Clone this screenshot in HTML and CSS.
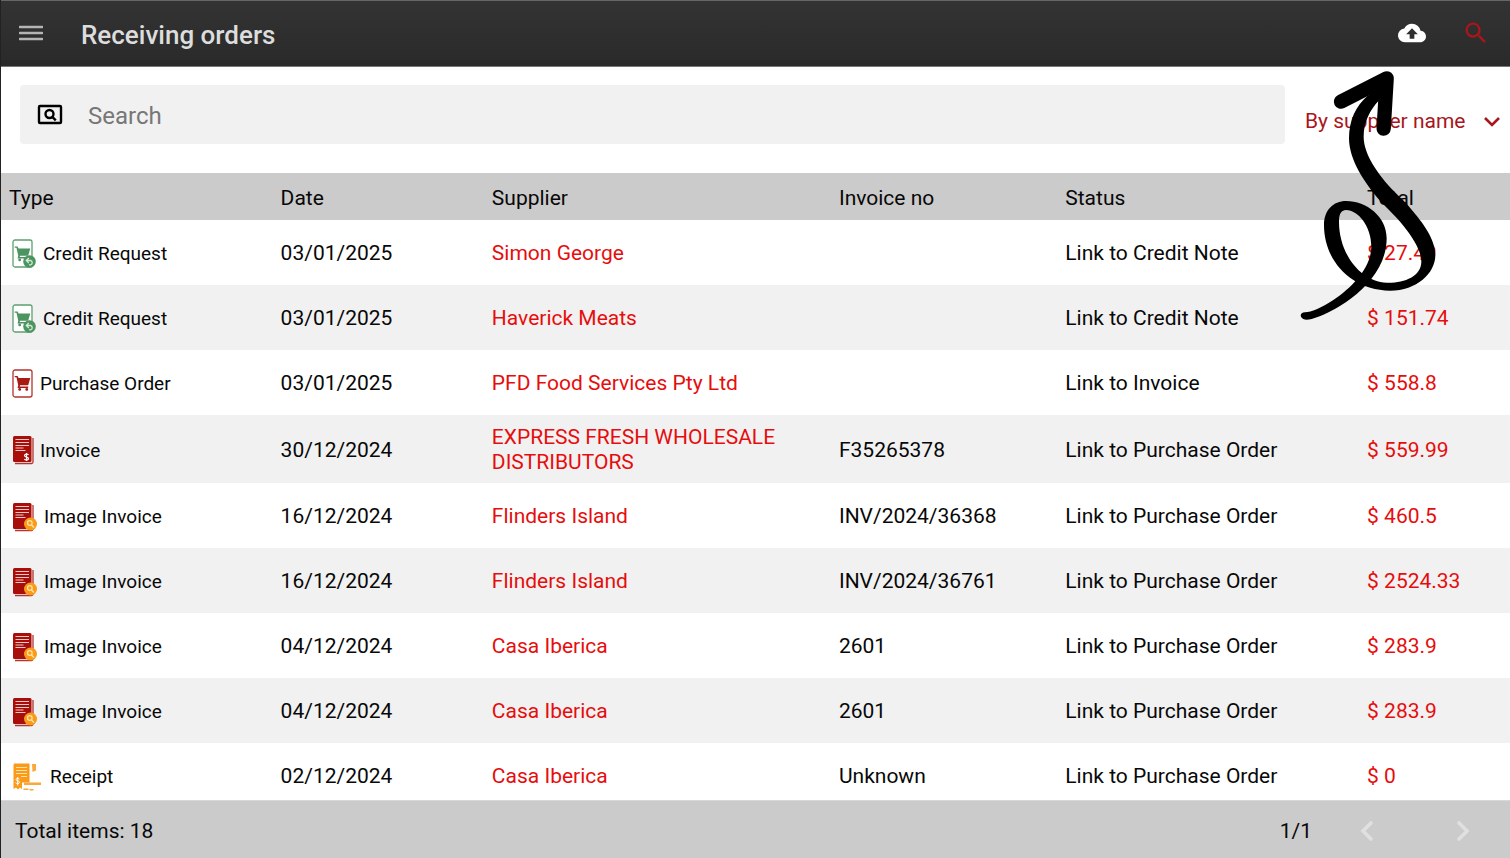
FILE: index.html
```html
<!DOCTYPE html>
<html lang="en">
<head>
    <meta charset="UTF-8">
    <meta name="viewport" content="width=device-width, initial-scale=1.0">
    <title>Receiving orders</title>
    <link rel="stylesheet" href="styles.css">
</head>
<body>
    <!-- shared icons -->
    <svg class="sprite" aria-hidden="true">
        <symbol id="cart" viewBox="0 0 24 24">
            <path d="M1 2h4l1.500 3H23l-3 10H8.500L8 17h12v2H5l1-4L3.500 4H1z"/>
            <circle cx="8" cy="21" r="2"/>
            <circle cx="18" cy="21" r="2"/>
        </symbol>
        <symbol id="credit" viewBox="0 0 24 30">
            <rect x="1" y="1" width="19" height="27" rx="2" fill="#fff" stroke="#5fa070" stroke-width="1.300"/>
            <use href="#cart" x="2" y="6" width="17" height="17" fill="#4c9460"/>
            <circle cx="17.500" cy="22.500" r="6.300" fill="#4c9460"/>
            <path d="M14.500 21.500h4a2.200 2.200 0 0 1 0 4.300h-1.500M16.800 19l-2.500 2.500 2.500 2.500" fill="none" stroke="#d5ead9" stroke-width="1.300"/>
        </symbol>
        <symbol id="purchase" viewBox="0 0 22 30">
            <rect x="1" y="1" width="19" height="27" rx="2" fill="#fff" stroke="#b3352f" stroke-width="1.300"/>
            <use href="#cart" x="2" y="5" width="17" height="18" fill="#a81a14"/>
        </symbol>
        <symbol id="book" viewBox="0 0 22 30">
            <path d="M3 28.500h16.500q1.500 0 1.500-1.500V3" fill="none" stroke="#b3352f" stroke-width="1.300"/>
            <rect x="1" y="1" width="18.500" height="26" rx="1.500" fill="#a80f0a"/>
            <path d="M3.500 4.500h13.500M3.500 7.500h13.500M3.500 10.500h13.500M3.500 13h8M3.500 15.500h10" stroke="#f3c8c4" stroke-width="1.200"/>
        </symbol>
        <symbol id="invoice" viewBox="0 0 22 30">
            <use href="#book" width="22" height="30"/>
            <path d="M16.500 19.800c-1-1.200-4-1-4 .8 0 2 4 1 4 3 0 1.900-3 2-4.200.6M14.500 18v8" fill="none" stroke="#fff" stroke-width="1.200"/>
        </symbol>
        <symbol id="image-invoice" viewBox="0 0 26 30">
            <use href="#book" width="22" height="30"/>
            <circle cx="18.500" cy="22" r="6.500" fill="#fb9a16"/>
            <circle cx="17.800" cy="21" r="2.300" fill="none" stroke="#ffe3a8" stroke-width="1.300"/>
            <path d="M19.500 23l2.500 2.500" stroke="#ffe3a8" stroke-width="1.500"/>
        </symbol>
        <symbol id="receipt" viewBox="0 0 30 30">
            <path d="M2 1.500h15.500v19H10V27l-2-1.500L6 27.500 4 25.500l-2.500 1.500V3z" fill="#fb9a16"/>
            <path d="M4 5.500h11M4 8.500h11M4 11.500h11M9 14.500h6" stroke="#ffe0ae" stroke-width="1"/>
            <path d="M7.500 17c-1-1-3.500-1-3.500.5 0 1.800 3.500 1 3.500 2.800 0 1.700-3 1.700-4 .5M5.700 15v8.500" fill="none" stroke="#fff" stroke-width="1"/>
            <path d="M20 2h4v6.500l-3.500 1.500zM12 20.500h17v2.500H12zM11.500 26.500h5v1.500h-5zM17.500 27h4v1.500h-4z" fill="#fba83a"/>
        </symbol>
    </svg>

    <header class="topbar">
        <button class="icon-button" aria-label="Menu">
            <svg width="24" height="18" viewBox="0 0 24 18"><path d="M1 3h22M1 9h22M1 15h22" stroke="#b4b4b4" stroke-width="2.600" stroke-linecap="round"/></svg>
        </button>
        <h1>Receiving orders</h1>
        <button class="icon-button" aria-label="Upload">
            <svg width="28" height="28" viewBox="0 0 24 24" fill="#fff"><path d="M19.350 10.040A7.490 7.490 0 0 0 12 4C9.110 4 6.600 5.640 5.350 8.040A5.994 5.994 0 0 0 0 14c0 3.310 2.690 6 6 6h13c2.760 0 5-2.240 5-5 0-2.640-2.050-4.780-4.650-4.960zM14 13v4h-4v-4H7l5-5 5 5h-3z"/></svg>
        </button>
        <button class="icon-button" aria-label="Search">
            <svg width="28" height="28" viewBox="0 0 24 24" fill="#a9161b"><path d="M15.500 14h-.79l-.28-.27A6.471 6.471 0 0 0 16 9.500 6.500 6.500 0 1 0 9.500 16c1.610 0 3.090-.59 4.230-1.570l.27.28v.79l5 4.990L20.490 19l-4.990-5zm-6 0C7.010 14 5 11.990 5 9.500S7.010 5 9.500 5 14 7.010 14 9.500 11.990 14 9.500 14z"/></svg>
        </button>
    </header>

    <div class="filters">
        <label class="search">
            <svg width="26" height="22" viewBox="0 0 26 22" fill="none" stroke="#000" stroke-width="2.400">
                <rect x="2" y="2" width="22" height="17" rx="1"/>
                <circle cx="12.500" cy="10" r="4"/>
                <path d="M15.300 12.800l3.500 3.500"/>
            </svg>
            <input type="search" placeholder="Search" aria-label="Search orders">
        </label>
        <div class="sort">
            <select aria-label="Sort orders">
                <option>By supplier name</option>
                <option>By date</option>
            </select>
            <svg width="16" height="12" viewBox="0 0 16 12"><path d="M1 2l7 7 7-7" fill="none" stroke="#a9161b" stroke-width="2.600"/></svg>
        </div>
    </div>

    <main class="orders">
        <table>
            <thead>
                <tr>
                    <th class="col-type">Type</th>
                    <th class="col-date">Date</th>
                    <th class="col-supplier">Supplier</th>
                    <th class="col-invoice">Invoice no</th>
                    <th class="col-status">Status</th>
                    <th class="col-total">Total</th>
                </tr>
            </thead>
            <tbody>
                <tr>
                    <td><span class="type"><svg width="28" height="30"><use href="#credit" width="24" height="30"/></svg>Credit Request</span></td>
                    <td>03/01/2025</td>
                    <td class="red">Simon George</td>
                    <td></td>
                    <td><a href="#">Link to Credit Note</a></td>
                    <td class="red">$ 27.49</td>
                </tr>
                <tr>
                    <td><span class="type"><svg width="28" height="30"><use href="#credit" width="24" height="30"/></svg>Credit Request</span></td>
                    <td>03/01/2025</td>
                    <td class="red">Haverick Meats</td>
                    <td></td>
                    <td><a href="#">Link to Credit Note</a></td>
                    <td class="red">$ 151.74</td>
                </tr>
                <tr>
                    <td><span class="type"><svg width="25" height="30"><use href="#purchase" width="22" height="30"/></svg>Purchase Order</span></td>
                    <td>03/01/2025</td>
                    <td class="red">PFD Food Services Pty Ltd</td>
                    <td></td>
                    <td><a href="#">Link to Invoice</a></td>
                    <td class="red">$ 558.8</td>
                </tr>
                <tr>
                    <td><span class="type"><svg width="25" height="30"><use href="#invoice" width="22" height="30"/></svg>Invoice</span></td>
                    <td>30/12/2024</td>
                    <td class="red">EXPRESS FRESH WHOLESALE DISTRIBUTORS</td>
                    <td>F35265378</td>
                    <td><a href="#">Link to Purchase Order</a></td>
                    <td class="red">$ 559.99</td>
                </tr>
                <tr>
                    <td><span class="type"><svg width="29" height="30"><use href="#image-invoice" width="26" height="30"/></svg>Image Invoice</span></td>
                    <td>16/12/2024</td>
                    <td class="red">Flinders Island</td>
                    <td>INV/2024/36368</td>
                    <td><a href="#">Link to Purchase Order</a></td>
                    <td class="red">$ 460.5</td>
                </tr>
                <tr>
                    <td><span class="type"><svg width="29" height="30"><use href="#image-invoice" width="26" height="30"/></svg>Image Invoice</span></td>
                    <td>16/12/2024</td>
                    <td class="red">Flinders Island</td>
                    <td>INV/2024/36761</td>
                    <td><a href="#">Link to Purchase Order</a></td>
                    <td class="red">$ 2524.33</td>
                </tr>
                <tr>
                    <td><span class="type"><svg width="29" height="30"><use href="#image-invoice" width="26" height="30"/></svg>Image Invoice</span></td>
                    <td>04/12/2024</td>
                    <td class="red">Casa Iberica</td>
                    <td>2601</td>
                    <td><a href="#">Link to Purchase Order</a></td>
                    <td class="red">$ 283.9</td>
                </tr>
                <tr>
                    <td><span class="type"><svg width="29" height="30"><use href="#image-invoice" width="26" height="30"/></svg>Image Invoice</span></td>
                    <td>04/12/2024</td>
                    <td class="red">Casa Iberica</td>
                    <td>2601</td>
                    <td><a href="#">Link to Purchase Order</a></td>
                    <td class="red">$ 283.9</td>
                </tr>
                <tr>
                    <td><span class="type"><svg width="35" height="30"><use href="#receipt" width="30" height="30"/></svg>Receipt</span></td>
                    <td>02/12/2024</td>
                    <td class="red">Casa Iberica</td>
                    <td>Unknown</td>
                    <td><a href="#">Link to Purchase Order</a></td>
                    <td class="red">$ 0</td>
                </tr>
            </tbody>
        </table>
    </main>

    <footer class="footer">
        <span class="count">Total items: 18</span>
        <span>1/1</span>
        <div class="pager">
            <button class="icon-button" aria-label="Previous page" disabled>
                <svg width="16" height="24" viewBox="0 0 16 24"><path d="M12 3l-8 8 8 8" fill="none" stroke="#e0e0e0" stroke-width="3.600" stroke-linecap="round"/></svg>
            </button>
            <button class="icon-button" aria-label="Next page" disabled>
                <svg width="16" height="24" viewBox="0 0 16 24"><path d="M4 3l8 8-8 8" fill="none" stroke="#e0e0e0" stroke-width="3.600" stroke-linecap="round"/></svg>
            </button>
        </div>
    </footer>

    <!-- hand drawn arrow pointing at the upload button -->
    <svg class="arrow" width="240" height="340" viewBox="0 0 720 1020" aria-hidden="true">
        <path d="M213 305L350 235L341 386" fill="none" stroke="#000" stroke-width="43" stroke-linecap="round" stroke-linejoin="round"/>
        <path d="M292 288C258 318 237 360 237 415C237 480 285 550 328 600C350 625 385 655 410 690C440 730 454 760 454 785C454 830 400 850 350 848C270 845 207 760 207 665C207 640 215 630 228 630C265 630 304 680 304 740C304 800 250 860 190 900C150 925 125 936 105 937C90 938 88 950 100 957C106 960 115 959 125 957C190 940 350 850 350 715C350 650 290 603 228 603C190 603 162 630 162 675C162 780 240 870 360 872C440 872 496 820 496 765C496 715 455 665 430 635C410 610 395 597 375 577C320 520 281 460 281 410C281 365 300 330 326 302L335 260Z"/>
    </svg>
</body>
</html>
```
FILE: styles.css
```css
* {
    box-sizing: border-box;
}
body {
    display: flex;
    flex-direction: column;
    height: 100vh;
    margin: 0;
    border-left: 1px solid #222;
    background-color: #fff;
    color: #080808;
    font-family: Roboto, sans-serif;
    font-size: 21px;
    line-height: 25px;
    overflow: hidden;
}
.sprite {
    position: absolute;
    width: 0;
    height: 0;
}
svg {
    display: block;
    flex: none;
}
.icon-button {
    background: none;
    border: 0;
    padding: 0;
    cursor: pointer;
}

.topbar {
    display: flex;
    align-items: center;
    flex: none;
    height: 67px;
    padding: 0 20px 1px 18px;
    border-top: 1px solid #666;
    border-bottom: 1px solid #777;
    background: linear-gradient(#333, #2a2a2a);
}
.topbar h1 {
    flex: 1;
    margin: 0 0 0 38px;
    padding-top: 3px;
    color: #ddd;
    font-size: 26px;
    font-weight: 500;
    line-height: 32px;
}
.topbar .icon-button + .icon-button {
    margin-left: 36px;
}

.filters {
    display: flex;
    flex: none;
    padding: 18px 10px 29px 19px;
}
.search {
    display: flex;
    align-items: center;
    flex: 1;
    height: 59px;
    padding: 0 17px;
    border-radius: 4px;
    background-color: #f1f1f1;
}
.search input {
    flex: 1;
    margin-left: 25px;
    padding: 3px 0 0;
    border: 0;
    outline: 0;
    background: none;
    font: inherit;
    font-size: 24px;
}
.search input::placeholder {
    color: #777;
}
.sort {
    display: flex;
    align-items: center;
    gap: 16px;
    margin-left: 20px;
    padding-top: 14px;
}
.sort select {
    appearance: none;
    min-width: 163px;
    padding: 0;
    border: 0;
    background: none;
    color: #a9161b;
    font: inherit;
}

.orders {
    flex: 1;
    min-height: 0;
    overflow: hidden;
}
table {
    width: 100%;
    table-layout: fixed;
    border-collapse: collapse;
}
th {
    height: 47px;
    padding: 3px 8px 0;
    background-color: #cbcbcb;
    font-weight: 400;
    text-align: left;
}
td {
    height: 65px;
    padding: 10px 8px 8px;
}
tbody tr:nth-child(even) {
    background-color: #f1f1f1;
}
td a {
    color: inherit;
    text-decoration: none;
}
.col-type {
    width: 18%;
}
.col-date {
    width: 14%;
}
.col-supplier {
    width: 23%;
}
.col-invoice {
    width: 15%;
}
.col-status {
    width: 20%;
}
.col-total {
    width: 10%;
}
.type {
    display: flex;
    align-items: center;
    gap: 3px;
    padding-left: 3px;
    font-size: 19px;
}
.red {
    color: #e60d0d;
}

.footer {
    display: flex;
    align-items: center;
    flex: none;
    height: 58px;
    padding: 4px 39px 0 14px;
    border-top: 1px solid #d8d8d8;
    background-color: #cbcbcb;
}
.count {
    flex: 1;
}
.pager {
    display: flex;
    gap: 80px;
    margin-left: 47px;
}

.arrow {
    position: absolute;
    top: 0;
    right: 0;
    pointer-events: none;
}
```
